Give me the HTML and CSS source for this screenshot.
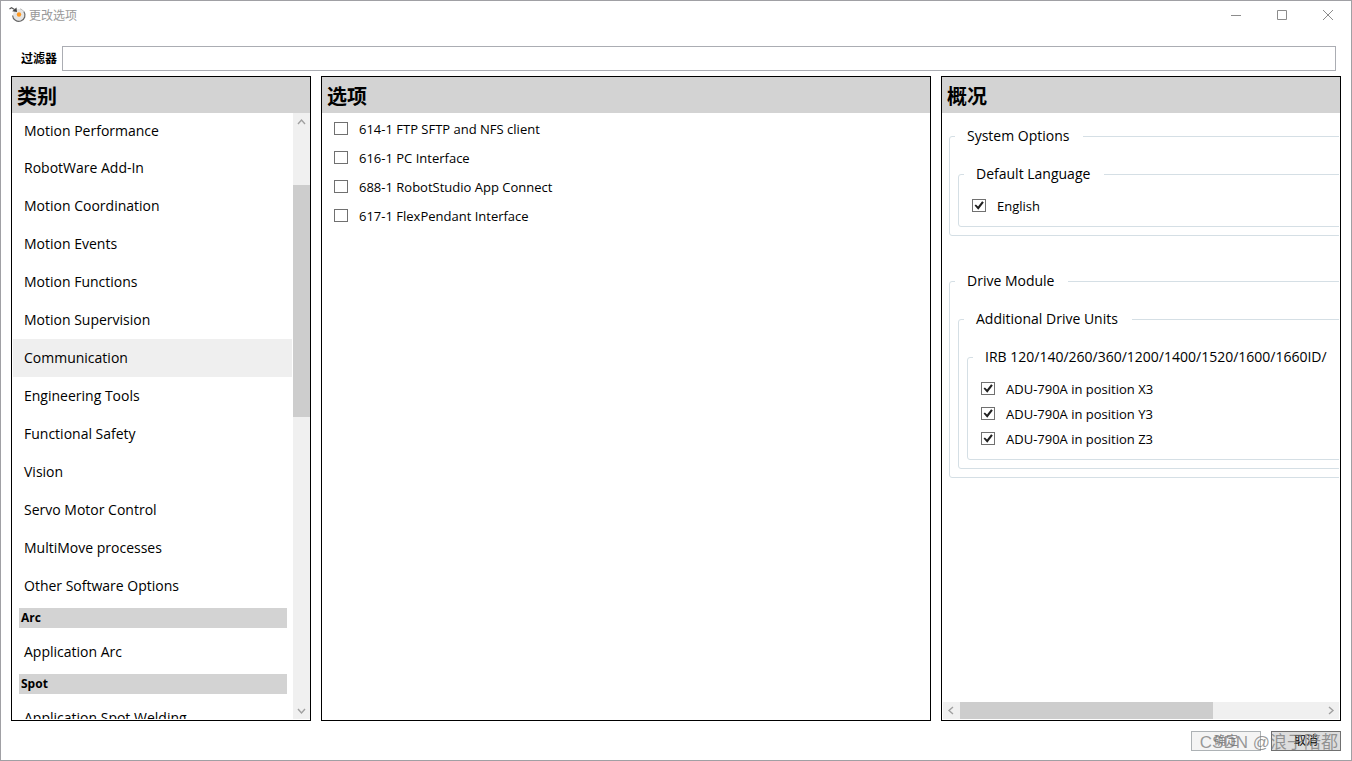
FILE: index.html
```html
<!DOCTYPE html>
<html lang="zh-CN">
    <head>
        <meta charset="utf-8">
        <title>更改选项</title>
        <link rel="stylesheet" href="styles.css">
    </head>
    <body>
        <div class="titlebar">
            <svg class="appIcon" width="18" height="16" viewBox="0 0 18 16">
                <circle cx="10" cy="8" r="6" fill="#e4e4e4"/>
                <path d="M14.8 4.5A6.2 6.2 0 1 1 3.6 8.5" fill="none" stroke="#666" stroke-width="1.2"/>
                <path d="M11 1.8A6.2 6.2 0 0 1 14.8 4.5" fill="none" stroke="#bbb" stroke-width="1"/>
                <path d="M0.5 2L2.5 0.8L5.5 2.5" fill="none" stroke="#555" stroke-width="1.2"/>
                <path d="M7.5 0.5L8 5L3.2 4.2Z" fill="#444"/>
                <circle cx="10" cy="7.5" r="2.2" fill="#ff981f"/>
            </svg>
            <span class="caption">更改选项</span>
            <button class="winBtn" aria-label="最小化"><svg width="10" height="10"><path d="M0 5.5H10"/></svg></button>
            <button class="winBtn" aria-label="最大化"><svg width="10" height="10"><path d="M0.5 0.5H9.5V9.5H0.5Z"/></svg></button>
            <button class="winBtn" aria-label="关闭"><svg width="10" height="10"><path d="M0 0L10 10M10 0L0 10"/></svg></button>
        </div>
        <div class="filter">
            <label for="filter">过滤器</label>
            <input type="text" id="filter">
        </div>
        <main class="panels">
            <section class="panel">
                <h2>类别</h2>
                <div class="categories">
                    <div class="categoryList">
                        <button>Motion Performance</button>
                        <button>RobotWare Add-In</button>
                        <button>Motion Coordination</button>
                        <button>Motion Events</button>
                        <button>Motion Functions</button>
                        <button>Motion Supervision</button>
                        <button class="selected">Communication</button>
                        <button>Engineering Tools</button>
                        <button>Functional Safety</button>
                        <button>Vision</button>
                        <button>Servo Motor Control</button>
                        <button>MultiMove processes</button>
                        <button>Other Software Options</button>
                        <h3>Arc</h3>
                        <button>Application Arc</button>
                        <h3>Spot</h3>
                        <button>Application Spot Welding</button>
                    </div>
                    <div class="scrollbar vertical">
                        <svg width="17" height="17"><path d="M5 11L8.5 7L12 11"/></svg>
                        <div class="track"><div class="thumb"></div></div>
                        <svg width="17" height="17"><path d="M5 7L8.5 11L12 7"/></svg>
                    </div>
                </div>
            </section>
            <section class="panel">
                <h2>选项</h2>
                <div class="options">
                    <label class="check"><input type="checkbox">614-1 FTP SFTP and NFS client</label>
                    <label class="check"><input type="checkbox">616-1 PC Interface</label>
                    <label class="check"><input type="checkbox">688-1 RobotStudio App Connect</label>
                    <label class="check"><input type="checkbox">617-1 FlexPendant Interface</label>
                </div>
            </section>
            <section class="panel">
                <h2>概况</h2>
                <div class="summary">
                    <fieldset>
                        <legend>System Options</legend>
                        <fieldset>
                            <legend>Default Language</legend>
                            <label class="check"><input type="checkbox" checked>English</label>
                        </fieldset>
                    </fieldset>
                    <fieldset>
                        <legend>Drive Module</legend>
                        <fieldset>
                            <legend>Additional Drive Units</legend>
                            <fieldset>
                                <legend>IRB 120/140/260/360/1200/1400/1520/1600/1660ID/</legend>
                                <label class="check"><input type="checkbox" checked>ADU-790A in position X3</label>
                                <label class="check"><input type="checkbox" checked>ADU-790A in position Y3</label>
                                <label class="check"><input type="checkbox" checked>ADU-790A in position Z3</label>
                            </fieldset>
                        </fieldset>
                    </fieldset>
                </div>
                <div class="scrollbar horizontal">
                    <svg width="17" height="17"><path d="M10 5L6 8.5L10 12"/></svg>
                    <div class="track"><div class="thumb"></div></div>
                    <svg width="17" height="17"><path d="M7 5L11 8.5L7 12"/></svg>
                </div>
            </section>
        </main>
        <footer>
            <button class="ok" disabled>确定</button>
            <button class="cancel">取消</button>
            <span class="watermark">CSDN @浪子陪都</span>
        </footer>
    </body>
</html>
```
FILE: styles.css
```css
* {
    box-sizing: border-box;
}
body {
    display: flex;
    flex-direction: column;
    height: 100vh;
    margin: 0;
    border: 1px solid #a0a0a4;
    background: white;
    color: black;
    font-family: "Open Sans", "Noto Sans CJK SC", sans-serif;
    font-size: 12px;
    overflow: hidden;
}
button {
    font: inherit;
    color: inherit;
    border: none;
    padding: 0;
    background: none;
}
svg {
    flex: none;
}
.titlebar {
    display: flex;
    align-items: center;
    height: 28px;
    padding-left: 8px;
}
.caption {
    flex: 1;
    margin-left: 2px;
    color: #999;
}
.winBtn {
    display: flex;
    align-items: center;
    justify-content: center;
    width: 46px;
    height: 28px;
}
.winBtn path {
    fill: none;
    stroke: #8c8c8c;
}
.filter {
    display: flex;
    align-items: center;
    gap: 5px;
    padding: 17px 15px 5px 20px;
}
.filter label {
    padding-bottom: 2px;
    font-weight: bold;
}
.filter input {
    flex: 1;
    height: 25px;
    border: 1px solid #abadb3;
    font: inherit;
}
.panels {
    flex: 1;
    min-height: 0;
    display: grid;
    grid-template-columns: 30fr 61fr 40fr;
    gap: 10px;
    padding: 0 10px;
}
.panel {
    display: flex;
    flex-direction: column;
    min-width: 0;
    min-height: 0;
    border: 1px solid black;
}
.panel h2 {
    flex: none;
    height: 36px;
    margin: 0;
    padding: 2px 0 0 5px;
    background: #d3d3d3;
    font-size: 20px;
    line-height: 36px;
}
.categories {
    flex: 1;
    min-height: 0;
    display: flex;
    padding-bottom: 1px;
}
.categoryList {
    flex: 1;
    overflow: hidden;
    padding: 0 1px;
}
.categoryList button {
    display: block;
    width: 100%;
    height: 38px;
    padding: 0 0 2px 11px;
    font-size: 14px;
    text-align: left;
}
/* the list is scrolled, so its first row is partly cut off */
.categoryList button:first-child {
    height: 36px;
}
.categoryList .selected {
    background: #efefef;
}
.categoryList h3 {
    height: 20px;
    margin: 3px 5px 5px 6px;
    padding-left: 2px;
    background: #d3d3d3;
    font-size: 12px;
    line-height: 20px;
}
.scrollbar {
    flex: none;
    display: flex;
    background: #f0f0f0;
}
.scrollbar path {
    fill: none;
    stroke: #a0a0a0;
    stroke-width: 1.4;
}
.track {
    flex: 1;
    display: grid;
}
.thumb {
    background: #cdcdcd;
}
.vertical {
    flex-direction: column;
}
.vertical .track {
    grid-template-rows: 55fr 233fr 285fr;
}
.vertical .thumb {
    grid-row: 2;
}
.horizontal {
    margin: 0 1px 1px 1px;
}
.horizontal .track {
    grid-template-columns: 253fr 109fr;
}
.check {
    display: flex;
    align-items: center;
    gap: 11px;
    height: 25px;
    font-size: 13px;
    white-space: nowrap;
}
.check input {
    appearance: none;
    flex: none;
    display: flex;
    width: 14px;
    height: 13px;
    margin: 0;
    border: 1px solid #707070;
    background: white;
}
.check input:checked::after {
    content: "";
    width: 12px;
    height: 11px;
    background: #212121;
    clip-path: polygon(13% 50%, 24% 40%, 42% 60%, 76% 12%, 90% 22%, 44% 88%);
}
.options {
    padding: 1px 12px;
}
.options .check {
    height: 29px;
}
.summary {
    flex: 1;
    min-height: 0;
    overflow: hidden;
    margin: 0 1px;
    padding: 13px 6px;
}
fieldset {
    min-width: 0;
    margin: 0;
    padding: 0 5px 8px 5px;
    border: 1px solid #d5dfe5;
    border-radius: 3px;
}
.summary > fieldset {
    width: 142%;
    margin-bottom: 35px;
}
fieldset fieldset {
    margin: 18px 3px 0 3px;
}
legend {
    padding: 0 14px 0 12px;
    font-size: 14px;
    line-height: 20px;
    white-space: nowrap;
}
fieldset .check {
    margin-left: 8px;
}
legend + .check {
    margin-top: 9px;
}
footer {
    position: relative;
    display: flex;
    justify-content: flex-end;
    gap: 10px;
    padding: 10px 10px 9px 10px;
}
footer button {
    width: 70px;
    height: 20px;
    line-height: 18px;
}
.ok {
    border: 1px solid #adb2b5;
    background: #f4f4f4;
    color: #838383;
}
.cancel {
    border: 1px solid #707070;
    background: #dddddd;
}
.watermark {
    position: absolute;
    right: 13px;
    top: 10px;
    color: rgba(120, 120, 120, 0.75);
    font-family: "Liberation Sans", "Noto Sans CJK SC", sans-serif;
    font-size: 17px;
    line-height: 24px;
}
```
